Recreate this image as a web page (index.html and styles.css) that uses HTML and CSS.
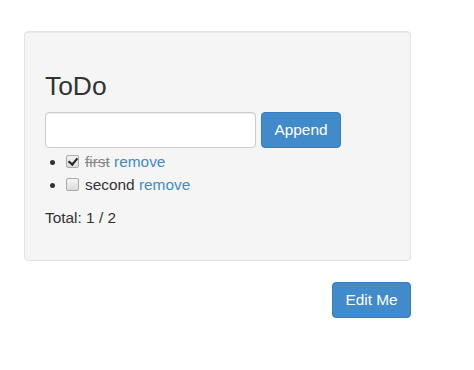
FILE: index.html
```html
<!DOCTYPE html>
<html>
<head>
<meta charset="utf-8">
<link rel="stylesheet" href="styles.css">
</head>
<body>
<div class="page">
  <div class="well">
    <h3 class="title">ToDo</h3>
    <form class="add-form">
      <input class="text-input" type="text">
      <button class="btn" type="button">Append</button>
    </form>
    <ul class="todo-list">
      <li class="todo-item"><input class="check" type="checkbox" checked><span class="done">first</span> <a class="link" href="#">remove</a></li>
      <li class="todo-item"><input class="check" type="checkbox"><span>second</span> <a class="link" href="#">remove</a></li>
    </ul>
    <p class="total">Total: 1 / 2</p>
  </div>
  <div class="actions">
    <button class="btn" type="button">Edit Me</button>
  </div>
</div>
</body>
</html>
```
FILE: styles.css
```css
html, body {
  margin: 0;
  padding: 0;
  background: #ffffff;
}
body {
  font-family: "Liberation Sans", Arial, sans-serif;
  font-size: 15.4px;
  line-height: 23px;
  color: #333333;
}
.page {
  width: 387px;
  padding: 31px 0 0 24px;
}
.well {
  background: #f5f5f5;
  border: 1px solid #e3e3e3;
  border-radius: 4px;
  padding: 40px 20px 20px 20px;
  box-shadow: inset 0 1px 1px rgba(0,0,0,0.05);
}
.title {
  margin: 0 0 11px 0;
  font-size: 26.4px;
  line-height: 28.6px;
  font-weight: 500;
  color: #333333;
}
.add-form {
  display: flex;
  gap: 5px;
  margin: 0;
}
.text-input {
  box-sizing: border-box;
  width: 211px;
  height: 36px;
  margin: 0;
  border: 1px solid #cccccc;
  border-radius: 4px;
  background: #ffffff;
  box-shadow: inset 0 1px 1px rgba(0,0,0,0.075);
  font: inherit;
  padding: 6px 12px;
}
.btn {
  box-sizing: border-box;
  height: 36px;
  width: 80px;
  margin: 0;
  padding: 0;
  border: 1px solid #357ebd;
  border-radius: 4px;
  background: #428bca;
  color: #ffffff;
  font-family: "Liberation Sans", Arial, sans-serif;
  font-size: 15.4px;
  font-weight: normal;
  line-height: 34px;
  text-align: center;
}
.todo-list {
  margin: 2px 0 10px 0;
  padding-left: 21px;
}
.todo-item {
  display: list-item;
}
.check {
  -webkit-appearance: none;
  appearance: none;
  position: relative;
  box-sizing: border-box;
  width: 13px;
  height: 13px;
  margin: 0 6px 0 0;
  vertical-align: -1px;
  border: 1px solid #a9a9a9;
  border-radius: 2px;
  background: linear-gradient(#f4f4f4, #dcdcdc);
}
.check:checked::after {
  content: "";
  position: absolute;
  left: 3px;
  top: 0px;
  width: 4px;
  height: 7px;
  border: solid #222222;
  border-width: 0 2px 2px 0;
  transform: rotate(40deg);
}
.done {
  color: #888888;
  text-decoration: line-through;
}
.link {
  color: #428bca;
  text-decoration: none;
}
.total {
  margin: 0 0 11px 0;
}
.actions {
  display: flex;
  justify-content: flex-end;
  margin-top: 21px;
}
.actions .btn {
  width: 79px;
}
```
